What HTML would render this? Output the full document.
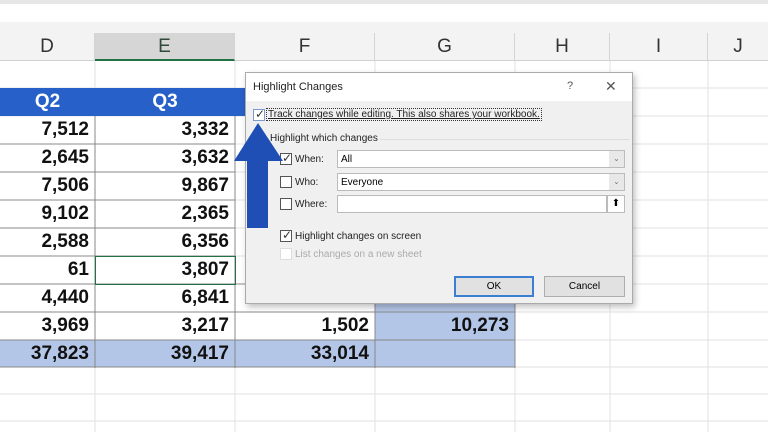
<!DOCTYPE html>
<html><head><style>
*{margin:0;padding:0;box-sizing:border-box}
body{width:768px;height:432px;overflow:hidden;background:#fff;position:relative;font-family:"Liberation Sans",Arial,sans-serif}
.a{position:absolute}
.hd{position:absolute;top:33px;height:28px;font-size:19px;color:#333;text-align:center;line-height:28px;border-right:1px solid #d4d4d4}
.c{position:absolute;height:28px;font-size:19px;font-weight:bold;text-align:right;padding-right:6px;line-height:28px;color:#111}
.dl{font-family:"Liberation Sans",Arial,sans-serif;font-size:10px;color:#222;position:absolute}
.cb{position:absolute;width:12px;height:12px;border:1px solid #555;background:#fff}
.ck{position:absolute;left:1px;top:-3px;font-size:12px;color:#333}
.inp{position:absolute;height:18px;background:#fff;border:1px solid #bbb;font-size:10px;line-height:18px;padding-left:3px}
</style></head><body>
<div class="a" style="left:0;top:0;width:768px;height:4px;background:#e6e6e6"></div>
<div class="a" style="left:0;top:22px;width:768px;height:11px;background:#f3f3f3"></div>
<div class="a" style="left:0;top:33px;width:768px;height:28px;background:#f3f3f3;border-bottom:1px solid #d0d0d0"></div>
<div class="hd" style="left:0;width:95px">D</div>
<div class="hd" style="left:95px;width:140px;background:#d6d6d6;border-bottom:2px solid #217346;color:#2f4a3a">E</div>
<div class="hd" style="left:235px;width:140px">F</div>
<div class="hd" style="left:375px;width:140px">G</div>
<div class="hd" style="left:515px;width:95px">H</div>
<div class="hd" style="left:610px;width:98px">I</div>
<div class="hd" style="left:708px;width:60px;border:none">J</div>
<svg class="a" style="left:0;top:61px" width="768" height="371">
<g stroke="#e2e2e2" stroke-width="1">
<line x1="95" y1="0" x2="95" y2="371"/><line x1="235" y1="0" x2="235" y2="371"/><line x1="375" y1="0" x2="375" y2="371"/><line x1="515" y1="0" x2="515" y2="371"/><line x1="610" y1="0" x2="610" y2="371"/><line x1="708" y1="0" x2="708" y2="371"/>
<line x1="0" y1="27" x2="768" y2="27"/><line x1="0" y1="55" x2="768" y2="55"/><line x1="0" y1="83" x2="768" y2="83"/><line x1="0" y1="111" x2="768" y2="111"/><line x1="0" y1="139" x2="768" y2="139"/><line x1="0" y1="167" x2="768" y2="167"/><line x1="0" y1="195" x2="768" y2="195"/><line x1="0" y1="223" x2="768" y2="223"/><line x1="0" y1="251" x2="768" y2="251"/><line x1="0" y1="279" x2="768" y2="279"/><line x1="0" y1="306" x2="768" y2="306"/><line x1="0" y1="333" x2="768" y2="333"/><line x1="0" y1="360" x2="768" y2="360"/>
</g></svg>
<div class="a" style="left:0;top:88px;width:245px;height:28px;background:#2660c8"></div>
<div class="c" style="left:0;top:88px;width:95px;color:#fff;text-align:center;padding:0">Q2</div>
<div class="c" style="left:95px;top:88px;width:140px;color:#fff;text-align:center;padding:0">Q3</div>
<div class="a" style="left:0;top:340px;width:515px;height:27px;background:#b4c6e7"></div>
<div class="a" style="left:375px;top:284px;width:140px;height:56px;background:#b4c6e7"></div>
<svg class="a" style="left:0;top:116px" width="520" height="252"><g stroke="#888" stroke-width="1">
<line x1="95" y1="0" x2="95" y2="252"/><line x1="235" y1="0" x2="235" y2="252"/><line x1="375" y1="168" x2="375" y2="252"/><line x1="515" y1="168" x2="515" y2="252"/>
<line x1="0" y1="28" x2="235" y2="28"/><line x1="0" y1="56" x2="235" y2="56"/><line x1="0" y1="84" x2="235" y2="84"/><line x1="0" y1="112" x2="235" y2="112"/><line x1="0" y1="140" x2="235" y2="140"/><line x1="0" y1="168" x2="515" y2="168"/><line x1="0" y1="196" x2="515" y2="196"/><line x1="0" y1="224" x2="515" y2="224"/><line x1="0" y1="251" x2="515" y2="251"/>
</g><rect x="95.5" y="140.5" width="140" height="28" fill="none" stroke="#217346" stroke-width="1"/></svg>
<div class="c" style="left:0;top:116px;width:95px">7,512</div><div class="c" style="left:95px;top:116px;width:140px">3,332</div>
<div class="c" style="left:0;top:144px;width:95px">2,645</div><div class="c" style="left:95px;top:144px;width:140px">3,632</div>
<div class="c" style="left:0;top:172px;width:95px">7,506</div><div class="c" style="left:95px;top:172px;width:140px">9,867</div>
<div class="c" style="left:0;top:200px;width:95px">9,102</div><div class="c" style="left:95px;top:200px;width:140px">2,365</div>
<div class="c" style="left:0;top:228px;width:95px">2,588</div><div class="c" style="left:95px;top:228px;width:140px">6,356</div>
<div class="c" style="left:0;top:256px;width:95px">61</div><div class="c" style="left:95px;top:256px;width:140px">3,807</div>
<div class="c" style="left:0;top:284px;width:95px">4,440</div><div class="c" style="left:95px;top:284px;width:140px">6,841</div>
<div class="c" style="left:0;top:312px;width:95px">3,969</div><div class="c" style="left:95px;top:312px;width:140px">3,217</div><div class="c" style="left:235px;top:312px;width:140px">1,502</div><div class="c" style="left:375px;top:312px;width:140px">10,273</div>
<div class="c" style="left:0;top:340px;width:95px">37,823</div><div class="c" style="left:95px;top:340px;width:140px">39,417</div><div class="c" style="left:235px;top:340px;width:140px">33,014</div>
<div class="a" style="left:245px;top:72px;width:388px;height:232px;background:#f0f0f0;border:1px solid #aaa;box-shadow:2px 3px 6px rgba(0,0,0,.25)"></div>
<div class="a" style="left:246px;top:73px;width:386px;height:28px;background:#fff"></div>
<div class="dl" style="left:253px;top:81px;font-size:11px">Highlight Changes</div>
<div class="dl" style="left:567px;top:80px;font-size:11px;color:#555">?</div>
<div class="dl" style="left:605px;top:78px;font-size:14px;color:#555">✕</div>
<div class="cb" style="left:253px;top:109px;border-color:#7a9ad0"><span class="ck">✓</span></div>
<div class="dl" style="left:266px;top:108px;border:1px dotted #333;padding:0 1px;text-decoration:underline;text-decoration-thickness:1px">Track changes while editing. This also shares your workbook.</div>
<div class="dl" style="left:270px;top:133px">Highlight which changes</div>
<div class="a" style="left:380px;top:139px;width:250px;height:1px;background:#ddd"></div>
<div class="cb" style="left:280px;top:153px"><span class="ck">✓</span></div><div class="dl" style="left:295px;top:154px">When:</div>
<div class="cb" style="left:280px;top:176px"></div><div class="dl" style="left:295px;top:177px">Who:</div>
<div class="cb" style="left:280px;top:198px"></div><div class="dl" style="left:295px;top:199px">Where:</div>
<div class="inp" style="left:337px;top:150px;width:288px">All</div>
<div class="a" style="left:609px;top:151px;width:15px;height:16px;background:#e8e8e8;font-size:8px;color:#777;text-align:center;line-height:16px">⌄</div>
<div class="inp" style="left:337px;top:173px;width:288px">Everyone</div>
<div class="a" style="left:609px;top:174px;width:15px;height:16px;background:#e8e8e8;font-size:8px;color:#777;text-align:center;line-height:16px">⌄</div>
<div class="inp" style="left:337px;top:195px;width:270px"></div>
<div class="a" style="left:607px;top:195px;width:18px;height:18px;background:#fff;border:1px solid #bbb;font-size:10px;text-align:center;line-height:16px">⬆</div>
<div class="cb" style="left:280px;top:230px"><span class="ck">✓</span></div><div class="dl" style="left:295px;top:231px">Highlight changes on screen</div>
<div class="cb" style="left:280px;top:248px;border-color:#ddd"></div><div class="dl" style="left:295px;top:249px;color:#aaa">List changes on a new sheet</div>
<div class="a" style="left:454px;top:276px;width:80px;height:21px;border:2px solid #3c7fd0;background:#e1e1e1;font-size:10px;text-align:center;line-height:17px">OK</div>
<div class="a" style="left:544px;top:276px;width:81px;height:21px;border:1px solid #adadad;background:#e1e1e1;font-size:10px;text-align:center;line-height:19px">Cancel</div>
<svg class="a" style="left:230px;top:118px" width="60" height="115"><polygon points="28,5 53,43 38,43 38,110 17,110 17,43 4,43" fill="#1f4fb5"/></svg>
</body></html>
